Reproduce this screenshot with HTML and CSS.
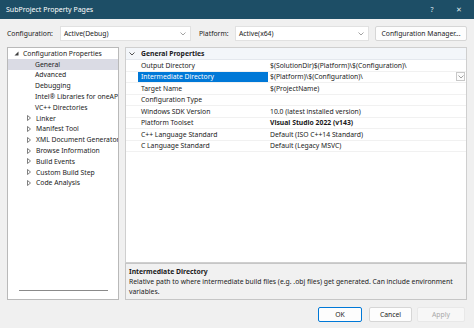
FILE: index.html
```html
<!DOCTYPE html>
<html>
<head>
<meta charset="utf-8">
<link rel="stylesheet" href="styles.css">
</head>
<body>
<div class="dialog">
  <div class="titlebar">
    <span class="title">SubProject Property Pages</span>
    <span class="tb-help">?</span>
    <span class="tb-close">✕</span>
  </div>
  <div class="toolbar">
    <span class="lbl lbl-config">Configuration:</span>
    <div class="combo combo-config"><span>Active(Debug)</span><svg class="chev" width="6" height="4" viewBox="0 0 6 4"><path d="M0.5 0.5 L3 3 L5.5 0.5" fill="none" stroke="#8a8a8a" stroke-width="0.8"/></svg></div>
    <span class="lbl lbl-plat">Platform:</span>
    <div class="combo combo-plat"><span>Active(x64)</span><svg class="chev" width="6" height="4" viewBox="0 0 6 4"><path d="M0.5 0.5 L3 3 L5.5 0.5" fill="none" stroke="#8a8a8a" stroke-width="0.8"/></svg></div>
    <div class="btn btn-cfgmgr">Configuration Manager...</div>
  </div>
  <div class="main">
    <div class="tree">
      <div class="trow root"><svg class="exp-open" width="5" height="5" viewBox="0 0 5 5"><path d="M4.5 0.5 L4.5 4.5 L0.5 4.5 Z" fill="#404040"/></svg><span>Configuration Properties</span></div>
      <div class="trow child sel"><span>General</span></div>
      <div class="trow child"><span>Advanced</span></div>
      <div class="trow child"><span>Debugging</span></div>
      <div class="trow child"><span>Intel® Libraries for oneAPI</span></div>
      <div class="trow child"><span>VC++ Directories</span></div>
      <div class="trow child exp"><svg class="exp-closed" width="4" height="6" viewBox="0 0 4 6"><path d="M0.5 0.5 L3.5 3 L0.5 5.5 Z" fill="none" stroke="#606060" stroke-width="0.8"/></svg><span>Linker</span></div>
      <div class="trow child exp"><svg class="exp-closed" width="4" height="6" viewBox="0 0 4 6"><path d="M0.5 0.5 L3.5 3 L0.5 5.5 Z" fill="none" stroke="#606060" stroke-width="0.8"/></svg><span>Manifest Tool</span></div>
      <div class="trow child exp"><svg class="exp-closed" width="4" height="6" viewBox="0 0 4 6"><path d="M0.5 0.5 L3.5 3 L0.5 5.5 Z" fill="none" stroke="#606060" stroke-width="0.8"/></svg><span>XML Document Generator</span></div>
      <div class="trow child exp"><svg class="exp-closed" width="4" height="6" viewBox="0 0 4 6"><path d="M0.5 0.5 L3.5 3 L0.5 5.5 Z" fill="none" stroke="#606060" stroke-width="0.8"/></svg><span>Browse Information</span></div>
      <div class="trow child exp"><svg class="exp-closed" width="4" height="6" viewBox="0 0 4 6"><path d="M0.5 0.5 L3.5 3 L0.5 5.5 Z" fill="none" stroke="#606060" stroke-width="0.8"/></svg><span>Build Events</span></div>
      <div class="trow child exp"><svg class="exp-closed" width="4" height="6" viewBox="0 0 4 6"><path d="M0.5 0.5 L3.5 3 L0.5 5.5 Z" fill="none" stroke="#606060" stroke-width="0.8"/></svg><span>Custom Build Step</span></div>
      <div class="trow child exp"><svg class="exp-closed" width="4" height="6" viewBox="0 0 4 6"><path d="M0.5 0.5 L3.5 3 L0.5 5.5 Z" fill="none" stroke="#606060" stroke-width="0.8"/></svg><span>Code Analysis</span></div>
      <div class="tree-fill"></div>
      <div class="hscroll"><div class="thumb"></div></div>
    </div>
    <div class="right">
      <div class="grid">
        <div class="grow cat"><span class="gutter"><svg width="6" height="4" viewBox="0 0 6 4"><path d="M0.5 0.5 L3 3 L5.5 0.5" fill="none" stroke="#404040" stroke-width="0.9"/></svg></span><span class="gname">General Properties</span></div>
        <div class="grow"><span class="gutter"></span><span class="gname">Output Directory</span><span class="gval">$(SolutionDir)$(Platform)\$(Configuration)\</span></div>
        <div class="grow active"><span class="gutter"></span><span class="gname">Intermediate Directory</span><span class="gval">$(Platform)\$(Configuration)\</span><span class="dd"><svg width="6" height="4" viewBox="0 0 6 4"><path d="M0.5 0.5 L3 3 L5.5 0.5" fill="none" stroke="#8a8a8a" stroke-width="0.8"/></svg></span></div>
        <div class="grow"><span class="gutter"></span><span class="gname">Target Name</span><span class="gval">$(ProjectName)</span></div>
        <div class="grow"><span class="gutter"></span><span class="gname">Configuration Type</span><span class="gval"></span></div>
        <div class="grow"><span class="gutter"></span><span class="gname">Windows SDK Version</span><span class="gval">10.0 (latest installed version)</span></div>
        <div class="grow"><span class="gutter"></span><span class="gname">Platform Toolset</span><span class="gval bold">Visual Studio 2022 (v143)</span></div>
        <div class="grow"><span class="gutter"></span><span class="gname">C++ Language Standard</span><span class="gval">Default (ISO C++14 Standard)</span></div>
        <div class="grow"><span class="gutter"></span><span class="gname">C Language Standard</span><span class="gval">Default (Legacy MSVC)</span></div>
      </div>
      <div class="desc">
        <div class="desc-title">Intermediate Directory</div>
        <div class="desc-text">Relative path to where intermediate build files (e.g. .obj files) get generated. Can include environment variables.</div>
      </div>
    </div>
  </div>
  <div class="buttons">
    <div class="btn btn-ok">OK</div>
    <div class="btn btn-cancel">Cancel</div>
    <div class="btn btn-apply">Apply</div>
  </div>
</div>
</body>
</html>
```
FILE: styles.css
```css
* { box-sizing: border-box; }
html, body { margin: 0; padding: 0; }
body {
  width: 474px;
  height: 328px;
  background: #f0f0f0;
  font-family: "Noto Sans", "Open Sans", sans-serif;
  font-size: 6.8px;
  color: #1a1a1a;
  overflow: hidden;
}
svg { flex-shrink: 0; }
.dialog { width: 474px; height: 328px; display: flex; flex-direction: column; }
.titlebar {
  height: 19px;
  background: #1d4e66;
  color: #ffffff;
  display: flex;
  align-items: center;
  padding-left: 6px;
  font-size: 7px;
}
.title { flex: 1; }
.tb-help { width: 10px; margin-right: 17px; text-align: center; font-size: 7px; color: #dfe8ec; }
.tb-close { width: 10px; margin-right: 10px; text-align: center; font-size: 7px; color: #dfe8ec; }

.toolbar {
  display: flex;
  align-items: center;
  height: 15px;
  margin-top: 7px;
  padding-left: 7px;
}
.lbl { white-space: nowrap; }
.lbl-config { width: 53px; }
.lbl-plat { width: 36px; margin-left: 8px; }
.combo {
  height: 15px;
  background: #ffffff;
  border: 1px solid #e1e1e1;
  display: flex;
  align-items: center;
  padding-left: 3px;
  padding-right: 4px;
}
.combo span { flex: 1; }
.combo-config { width: 131px; }
.combo-plat { width: 134px; }
.btn {
  height: 15px;
  background: #fdfdfd;
  border: 1px solid #d6d6d6;
  border-radius: 2px;
  display: flex;
  align-items: center;
  justify-content: center;
  white-space: nowrap;
}
.btn-cfgmgr { width: 92px; margin-left: 6px; }

.main {
  display: flex;
  margin-top: 6px;
  padding-left: 7px;
  height: 253px;
}
.tree {
  width: 112px;
  height: 253px;
  background: #ffffff;
  border: 1px solid #b9b9b9;
  display: flex;
  flex-direction: column;
  overflow: hidden;
}
.trow {
  height: 10.8px;
  flex-shrink: 0;
  display: flex;
  align-items: center;
  white-space: nowrap;
  overflow: hidden;
}
.trow.root { padding-left: 6px; }
.trow.root svg { margin-right: 4px; }
.trow.child { padding-left: 27px; }
.trow.child.exp { padding-left: 19px; }
.trow.child.exp svg { margin-right: 5px; }
.trow.sel { background: #dadbe4; }
.tree-fill { flex: 1; }
.hscroll { height: 9px; padding-left: 11px; display: flex; align-items: flex-start; }
.thumb { width: 89px; height: 1px; background: #8a8a8a; }

.right {
  width: 342px;
  margin-left: 6px;
  display: flex;
  flex-direction: column;
}
.grid {
  height: 216px;
  background: #ffffff;
  border: 1px solid #cfcfcf;
}
.grow {
  height: 11.5px;
  display: flex;
  align-items: center;
  border-bottom: 1px solid #f1f1f1;
  white-space: nowrap;
}
.grow.cat {
  height: 12px;
  background: #f3f6fa;
  border-bottom: 1px solid #e4e8ee;
  font-weight: bold;
}
.gutter { width: 12px; display: flex; justify-content: center; align-items: center; }
.gname { width: 130px; padding-left: 3px; height: 100%; display: flex; align-items: center; }
.grow.cat .gname { width: auto; }
.gval { flex: 1; padding-left: 2px; }
.gval.bold { font-weight: bold; }
.grow.active .gname { background: #0078d7; color: #ffffff; }
.dd {
  width: 9px;
  height: 9px;
  border: 1px solid #c8c8c8;
  background: #fbfbfb;
  display: flex;
  align-items: center;
  justify-content: center;
  margin-right: 1px;
}
.desc {
  height: 37px;
  border: 1px solid #c6c6c6;
  background: #f1f1f1;
  padding: 3px 3px 0 3px;
  line-height: 10px;
}
.desc-title { font-weight: bold; }

.buttons {
  display: flex;
  justify-content: flex-end;
  margin-top: 7px;
  padding-right: 9px;
}
.btn-ok { width: 44px; border: 1px solid #0078d7; }
.btn-cancel { width: 43px; margin-left: 7px; }
.btn-apply { width: 48px; margin-left: 5px; color: #a8a8a8; border-color: #e8e8e8; background: #f7f7f7; }
```
